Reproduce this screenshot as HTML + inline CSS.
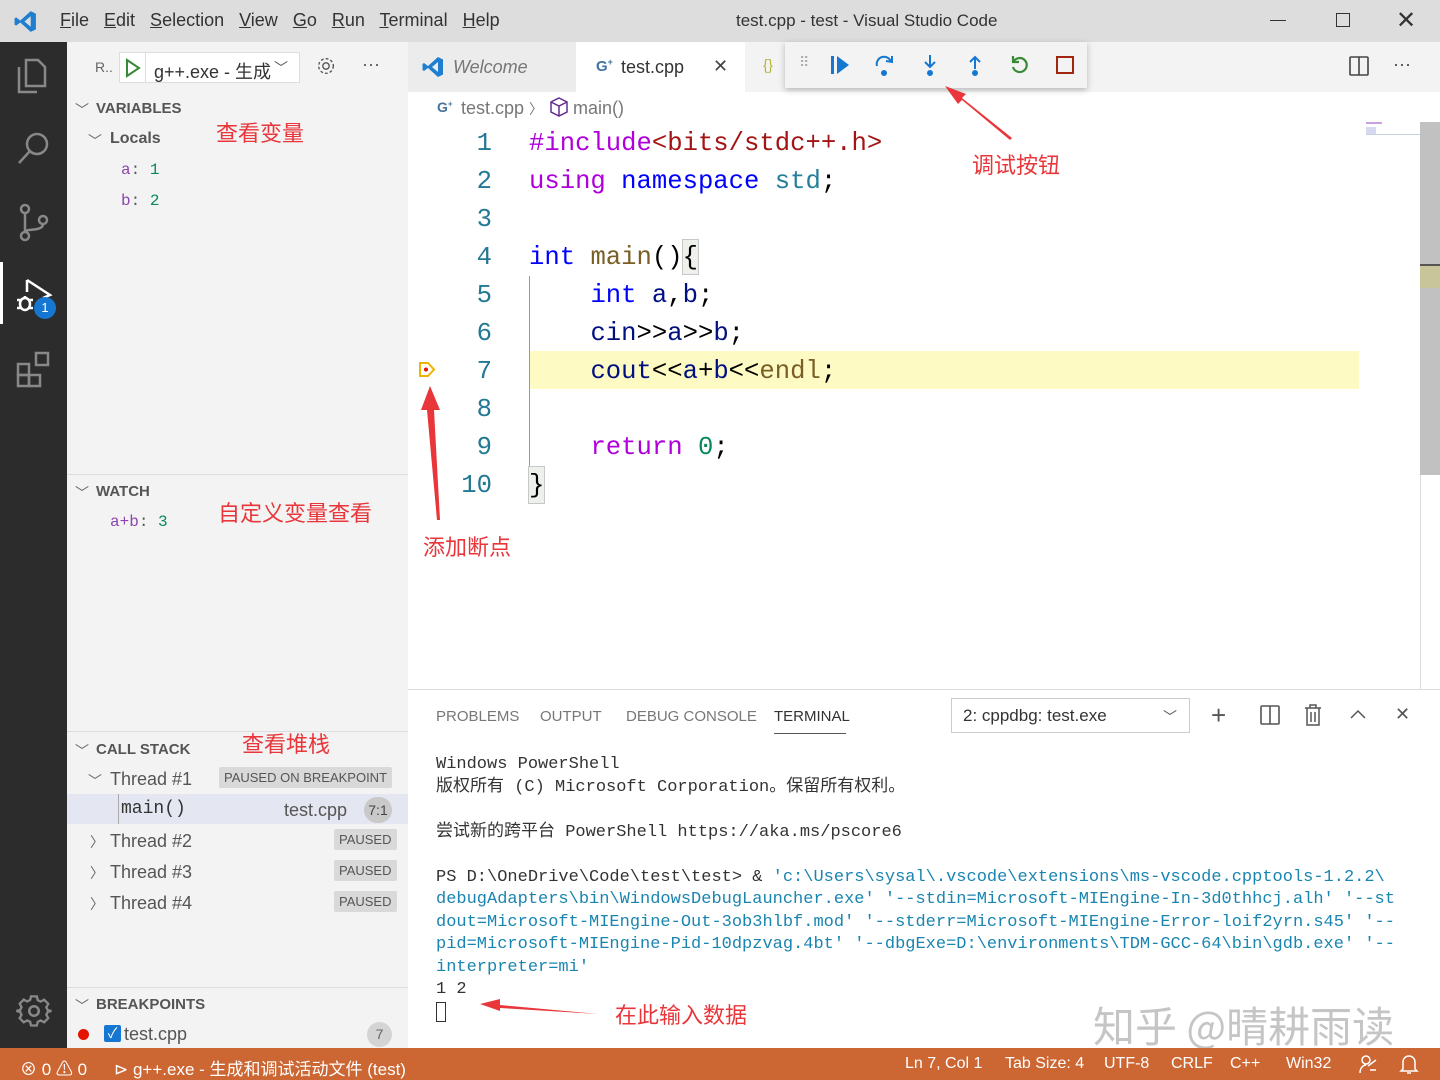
<!DOCTYPE html>
<html><head><meta charset="utf-8"><style>
*{margin:0;padding:0;box-sizing:border-box}
body{width:1440px;height:1080px;overflow:hidden;position:relative;background:#fff;font-family:"Liberation Sans","Noto Sans CJK SC",sans-serif;color:#333}
.a{position:absolute;white-space:nowrap}
.mono{font-family:"Liberation Mono","Noto Sans CJK SC",monospace}
.red{color:#e8363a;font-family:"Noto Sans CJK SC",sans-serif;font-size:22px}
.hdr{font-size:15px;font-weight:bold;color:#555}
.badge{background:#d9d9d9;color:#555;font-size:13px;padding:3px 5px;border-radius:2px}
.chev{color:#666;font-size:14px}
.code{font-family:"Liberation Mono",monospace;font-size:25.6px;line-height:38px}
.ln{color:#237893;text-align:right;width:60px}
.term{font-family:"Liberation Mono","Noto Sans CJK SC",monospace;font-size:17px;line-height:22.5px;color:#333}
.tl{color:#1a85b0}
.sb{font-size:16px;color:#fff;top:1055px}
</style></head><body>
<!-- title bar -->
<div class="a" style="left:0;top:0;width:1440px;height:42px;background:#dddddd"></div>
<svg class="a" style="left:13px;top:9px" width="25" height="25" viewBox="0 0 24 24"><path d="M17 2 L22 4.5 V19.5 L17 22 L7 13 L3 16 L1.5 15 V9 L3 8 L7 11 L17 2Z M17 7 L11 12 L17 17Z" fill="#1f7ed0" fill-rule="evenodd"/></svg>
<div class="a" style="left:60px;top:10px;font-size:18px;color:#333;word-spacing:0">
<span style="text-decoration:underline 1px">F</span>ile&nbsp;&nbsp; <span style="text-decoration:underline 1px">E</span>dit&nbsp;&nbsp; <span style="text-decoration:underline 1px">S</span>election&nbsp;&nbsp; <span style="text-decoration:underline 1px">V</span>iew&nbsp;&nbsp; <span style="text-decoration:underline 1px">G</span>o&nbsp;&nbsp; <span style="text-decoration:underline 1px">R</span>un&nbsp;&nbsp; <span style="text-decoration:underline 1px">T</span>erminal&nbsp;&nbsp; <span style="text-decoration:underline 1px">H</span>elp</div>
<div class="a" style="left:736px;top:11px;font-size:17px;color:#333">test.cpp - test - Visual Studio Code</div>
<div class="a" style="left:1270px;top:20px;width:16px;height:1px;background:#333"></div>
<div class="a" style="left:1336px;top:13px;width:14px;height:14px;border:1.5px solid #333"></div>
<div class="a" style="left:1396px;top:6px;font-size:24px;color:#333">✕</div>

<!-- activity bar -->
<div class="a" style="left:0;top:42px;width:67px;height:1006px;background:#2c2c2c"></div>
<svg class="a" style="left:16px;top:56px" width="34" height="40" viewBox="0 0 34 40" fill="none" stroke="#888" stroke-width="2.5"><path d="M10 4h12l7 7v19H10z M3 11v25h18"/></svg>
<svg class="a" style="left:16px;top:130px" width="36" height="36" viewBox="0 0 36 36" fill="none" stroke="#888" stroke-width="2.5"><circle cx="21" cy="14" r="10"/><path d="M14 21 L3 33"/></svg>
<svg class="a" style="left:18px;top:203px" width="32" height="40" viewBox="0 0 32 40" fill="none" stroke="#888" stroke-width="2.5"><circle cx="7" cy="6" r="4"/><circle cx="7" cy="33" r="4"/><circle cx="25" cy="17" r="4"/><path d="M7 10v19 M25 21c0 8-18 4-18 8"/></svg>
<div class="a" style="left:0;top:262px;width:3px;height:62px;background:#fff"></div>
<svg class="a" style="left:15px;top:278px" width="40" height="40" viewBox="0 0 40 40" fill="none" stroke="#fff" stroke-width="2.5"><path d="M12 2 L12 14 M12 2 L35 17 L28 20"/><ellipse cx="10" cy="26" rx="5" ry="6"/><path d="M2 22h4 M2 30h4 M14 22h4 M14 30h4 M10 18v2"/></svg>
<div class="a" style="left:34px;top:297px;width:22px;height:22px;border-radius:11px;background:#1677d2;color:#fff;font-size:13px;text-align:center;line-height:22px">1</div>
<svg class="a" style="left:16px;top:350px" width="36" height="38" viewBox="0 0 36 38" fill="none" stroke="#888" stroke-width="2.5"><rect x="2" y="14" width="11" height="11"/><rect x="2" y="25" width="11" height="11"/><rect x="13" y="25" width="11" height="11"/><rect x="20" y="3" width="12" height="12"/></svg>
<svg class="a" style="left:15px;top:992px" width="38" height="38" viewBox="0 0 24 24" fill="none" stroke="#888" stroke-width="1.6"><circle cx="12" cy="12" r="3"/><path d="M10 2h4l.6 2.6 2 1 2.4-1.3 2.8 2.8-1.3 2.4 1 2L24 12v0 0l-2.5 .6-1 2 1.3 2.4-2.8 2.8-2.4-1.3-2 1L14 22h-4l-.6-2.5-2-1-2.4 1.3-2.8-2.8 1.3-2.4-1-2L0 12l2.5-.6 1-2L2.2 7l2.8-2.8 2.4 1.3 2-1z" transform="scale(.92) translate(1 1)"/></svg>

<!-- sidebar -->
<div class="a" style="left:67px;top:42px;width:341px;height:1006px;background:#f3f3f3"></div>
<div class="a" style="left:95px;top:59px;font-size:14px;color:#666">R..</div>
<div class="a" style="left:119px;top:52px;width:181px;height:31px;background:#fff;border:1px solid #ddd"></div>
<div class="a" style="left:145px;top:53px;width:1px;height:29px;background:#ddd"></div>
<svg class="a" style="left:125px;top:58px" width="16" height="20"><path d="M2 2 L14 10 L2 18Z" fill="none" stroke="#388a34" stroke-width="2"/></svg>
<div class="a" style="left:154px;top:58px;font-size:18px;color:#333">g++.exe - 生成</div>
<div class="a" style="left:274px;top:58px;font-size:14px;color:#555">﹀</div>
<svg class="a" style="left:315px;top:55px" width="22" height="22" viewBox="0 0 24 24" fill="none" stroke="#555" stroke-width="1.5"><circle cx="12" cy="12" r="3.5"/><circle cx="12" cy="12" r="8" stroke-dasharray="3 2.3"/></svg>
<div class="a" style="left:362px;top:54px;font-size:18px;color:#555">···</div>

<div class="a chev" style="left:75px;top:100px">﹀</div>
<div class="a hdr" style="left:96px;top:100px">VARIABLES</div>
<div class="a chev" style="left:88px;top:131px">﹀</div>
<div class="a" style="left:110px;top:130px;font-size:16px;font-weight:bold;color:#555">Locals</div>
<div class="a red" style="left:216px;top:116px">查看变量</div>
<div class="a mono" style="left:121px;top:161px;font-size:16px"><span style="color:#8e44ad">a</span><span style="color:#555">:</span> <span style="color:#09885a">1</span></div>
<div class="a mono" style="left:121px;top:192px;font-size:16px"><span style="color:#8e44ad">b</span><span style="color:#555">:</span> <span style="color:#09885a">2</span></div>

<div class="a" style="left:67px;top:474px;width:341px;height:1px;background:#ddd"></div>
<div class="a chev" style="left:75px;top:483px">﹀</div>
<div class="a hdr" style="left:96px;top:483px">WATCH</div>
<div class="a mono" style="left:110px;top:513px;font-size:16px"><span style="color:#8e44ad">a+b</span><span style="color:#555">:</span> <span style="color:#09885a">3</span></div>
<div class="a red" style="left:218px;top:496px">自定义变量查看</div>

<div class="a" style="left:67px;top:731px;width:341px;height:1px;background:#ddd"></div>
<div class="a chev" style="left:75px;top:741px">﹀</div>
<div class="a hdr" style="left:96px;top:741px">CALL STACK</div>
<div class="a red" style="left:242px;top:727px">查看堆栈</div>
<div class="a chev" style="left:88px;top:771px">﹀</div>
<div class="a" style="left:110px;top:769px;font-size:18px;color:#555">Thread #1</div>
<div class="a badge" style="left:219px;top:767px">PAUSED ON BREAKPOINT</div>
<div class="a" style="left:67px;top:794px;width:341px;height:30px;background:#e4e6f1"></div>
<div class="a" style="left:118px;top:794px;width:1px;height:30px;background:#aaa"></div>
<div class="a mono" style="left:121px;top:799px;font-size:18px;color:#333">main()</div>
<div class="a" style="left:284px;top:800px;font-size:18px;color:#555">test.cpp</div>
<div class="a" style="left:364px;top:797px;width:28px;height:26px;border-radius:13px;background:#c9c9c9;font-size:14px;color:#444;text-align:center;line-height:26px">7:1</div>
<div class="a chev" style="left:90px;top:832px">〉</div><div class="a" style="left:110px;top:831px;font-size:18px;color:#555">Thread #2</div><div class="a badge" style="left:334px;top:829px">PAUSED</div>
<div class="a chev" style="left:90px;top:863px">〉</div><div class="a" style="left:110px;top:862px;font-size:18px;color:#555">Thread #3</div><div class="a badge" style="left:334px;top:860px">PAUSED</div>
<div class="a chev" style="left:90px;top:894px">〉</div><div class="a" style="left:110px;top:893px;font-size:18px;color:#555">Thread #4</div><div class="a badge" style="left:334px;top:891px">PAUSED</div>

<div class="a" style="left:67px;top:987px;width:341px;height:1px;background:#ddd"></div>
<div class="a chev" style="left:75px;top:996px">﹀</div>
<div class="a hdr" style="left:96px;top:996px">BREAKPOINTS</div>
<div class="a" style="left:78px;top:1029px;width:11px;height:11px;border-radius:6px;background:#e51400"></div>
<div class="a" style="left:104px;top:1025px;width:17px;height:17px;border-radius:2px;background:#1677d2;color:#fff;font-size:14px;text-align:center;line-height:17px">✓</div>
<div class="a" style="left:124px;top:1024px;font-size:18px;color:#555">test.cpp</div>
<div class="a" style="left:367px;top:1022px;width:25px;height:25px;border-radius:13px;background:#d4d4d4;font-size:14px;color:#666;text-align:center;line-height:25px">7</div>

<!-- tabs -->
<div class="a" style="left:408px;top:42px;width:1032px;height:50px;background:#f3f3f3"></div>
<div class="a" style="left:408px;top:42px;width:168px;height:50px;background:#ececec"></div>
<svg class="a" style="left:421px;top:55px" width="24" height="24" viewBox="0 0 24 24"><path d="M17 2 L22 4.5 V19.5 L17 22 L7 13 L3 16 L1.5 15 V9 L3 8 L7 11 L17 2Z M17 7 L11 12 L17 17Z" fill="#1f7ed0" fill-rule="evenodd"/></svg>
<div class="a" style="left:453px;top:57px;font-size:18px;font-style:italic;color:#777">Welcome</div>
<div class="a" style="left:576px;top:42px;width:169px;height:50px;background:#fff"></div>
<div class="a" style="left:596px;top:57px;font-size:15px;color:#44739e;font-weight:bold">G<sup style="font-size:9px">+</sup></div>
<div class="a" style="left:621px;top:57px;font-size:18px;color:#333">test.cpp</div>
<div class="a" style="left:713px;top:56px;font-size:18px;color:#444">✕</div>
<div class="a" style="left:763px;top:57px;font-size:15px;color:#b8b43a">{}</div>
<!-- debug toolbar -->
<div class="a" style="left:785px;top:42px;width:302px;height:46px;background:#f3f3f3;box-shadow:0 2px 6px rgba(0,0,0,.25)"></div>
<div class="a" style="left:799px;top:54px;font-size:14px;color:#aaa;letter-spacing:-2px">⠿</div>
<svg class="a" style="left:829px;top:54px" width="22" height="22"><rect x="2" y="2" width="3" height="18" fill="#1677d2"/><path d="M8 2 L20 11 L8 20Z" fill="#1677d2"/></svg>
<svg class="a" style="left:873px;top:54px" width="24" height="24" fill="none" stroke="#1677d2" stroke-width="2"><path d="M4 12 A7 7 0 0 1 18 8"/><path d="M13 7 L19 8 L19 2"/><circle cx="11" cy="19" r="2" fill="#1677d2"/></svg>
<svg class="a" style="left:919px;top:53px" width="22" height="24" fill="none" stroke="#1677d2" stroke-width="2"><path d="M11 2v12 M6 9l5 5 5-5"/><circle cx="11" cy="20" r="2" fill="#1677d2"/></svg>
<svg class="a" style="left:964px;top:53px" width="22" height="24" fill="none" stroke="#1677d2" stroke-width="2"><path d="M11 4v12 M6 9l5-5 5 5"/><circle cx="11" cy="20" r="2" fill="#1677d2"/></svg>
<svg class="a" style="left:1008px;top:53px" width="24" height="24" fill="none" stroke="#388a34" stroke-width="2.2"><path d="M6 8 A7 7 0 1 1 5 14"/><path d="M5 3v6h6"/></svg>
<div class="a" style="left:1056px;top:56px;width:18px;height:18px;border:2px solid #a1260d"></div>
<svg class="a" style="left:1349px;top:56px" width="20" height="20" fill="none" stroke="#444" stroke-width="1.6"><rect x="1" y="1" width="18" height="18" rx="1"/><path d="M10 1v18"/></svg>
<div class="a" style="left:1393px;top:54px;font-size:18px;color:#444">···</div>

<!-- breadcrumb -->
<div class="a" style="left:437px;top:99px;font-size:14px;color:#44739e;font-weight:bold">G<sup style="font-size:8px">+</sup></div>
<div class="a" style="left:461px;top:98px;font-size:18px;color:#777">test.cpp <span style="font-size:14px">〉</span></div>
<svg class="a" style="left:550px;top:97px" width="18" height="20" fill="none" stroke="#652d90" stroke-width="1.5"><path d="M9 1 L17 5 V15 L9 19 L1 15 V5Z M1 5 L9 9 L17 5 M9 9V19"/></svg>
<div class="a" style="left:573px;top:98px;font-size:18px;color:#777">main()</div>

<!-- editor -->
<div class="a" style="left:529px;top:351px;width:830px;height:38px;background:#fdfbc3"></div>
<div class="a" style="left:529px;top:276px;width:1px;height:190px;background:#999"></div>
<div class="a" style="left:682px;top:239px;width:17px;height:36px;background:#eef0ec;border:1px solid #c8c8c8"></div>
<div class="a" style="left:528px;top:466px;width:17px;height:38px;background:#eef0ec;border:1px solid #c8c8c8"></div>
<div class="a code ln" style="left:432px;top:125px">1<br>2<br>3<br>4<br>5<br>6<br>7<br>8<br>9<br>10</div>
<div class="a code" style="left:529px;top:125px;color:#000">
<span style="color:#af00db">#include</span><span style="color:#a31515">&lt;bits/stdc++.h&gt;</span><br>
<span style="color:#af00db">using</span> <span style="color:#0000ff">namespace</span> <span style="color:#267f99">std</span>;<br>
<br>
<span style="color:#0000ff">int</span> <span style="color:#795e26">main</span>(){<br>
&nbsp;&nbsp;&nbsp;&nbsp;<span style="color:#0000ff">int</span> <span style="color:#001080">a</span>,<span style="color:#001080">b</span>;<br>
&nbsp;&nbsp;&nbsp;&nbsp;<span style="color:#001080">cin</span>&gt;&gt;<span style="color:#001080">a</span>&gt;&gt;<span style="color:#001080">b</span>;<br>
&nbsp;&nbsp;&nbsp;&nbsp;<span style="color:#001080">cout</span>&lt;&lt;<span style="color:#001080">a</span>+<span style="color:#001080">b</span>&lt;&lt;<span style="color:#795e26">endl</span>;<br>
<br>
&nbsp;&nbsp;&nbsp;&nbsp;<span style="color:#af00db">return</span> <span style="color:#09885a">0</span>;<br>
}</div>
<svg class="a" style="left:418px;top:361px" width="18" height="17"><path d="M2 2 H10 L16 8.5 L10 15 H2Z" fill="#fff" stroke="#f0b400" stroke-width="2"/><circle cx="8" cy="8.5" r="2" fill="#e51400"/></svg>
<!-- minimap & scrollbar -->
<div class="a" style="left:1366px;top:122px;width:16px;height:2px;background:#c9a0e0"></div>
<div class="a" style="left:1366px;top:127px;width:10px;height:8px;background:#d8d8ee"></div>
<div class="a" style="left:1366px;top:134px;width:54px;height:1px;background:#c4d4e4"></div>
<div class="a" style="left:1420px;top:122px;width:20px;height:353px;background:#c1c1c1"></div>
<div class="a" style="left:1420px;top:264px;width:20px;height:2px;background:#555"></div>
<div class="a" style="left:1420px;top:266px;width:20px;height:22px;background:#c8c59a"></div>
<div class="a" style="left:1420px;top:475px;width:1px;height:215px;background:#ddd"></div>

<!-- annotations arrows -->
<svg class="a" style="left:0;top:0" width="1440" height="1080">
<path d="M1010 140 L962 100 L958 104 L945 86 L966 94 L962 98 L1012 138Z" fill="#e8363a"/>
<path d="M440 520 L434 410 L440 410 L430 386 L421 410 L427 410 L437 520Z" fill="#e8363a"/>
<path d="M598 1014 L500 1005 L500 999 L480 1004 L500 1011 L500 1008Z" fill="#e8363a"/>
</svg>
<div class="a red" style="left:972px;top:148px">调试按钮</div>
<div class="a red" style="left:423px;top:530px">添加断点</div>
<div class="a red" style="left:615px;top:998px">在此输入数据</div>

<!-- panel -->
<div class="a" style="left:408px;top:689px;width:1032px;height:1px;background:#ddd"></div>
<div class="a" style="left:436px;top:708px;font-size:15px;color:#777">PROBLEMS</div>
<div class="a" style="left:540px;top:708px;font-size:15px;color:#777">OUTPUT</div>
<div class="a" style="left:626px;top:708px;font-size:15px;color:#777">DEBUG CONSOLE</div>
<div class="a" style="left:774px;top:708px;font-size:15px;color:#333">TERMINAL</div>
<div class="a" style="left:774px;top:733px;width:72px;height:1px;background:#555"></div>
<div class="a" style="left:951px;top:698px;width:239px;height:35px;border:1px solid #ccc;background:#fff"></div>
<div class="a" style="left:963px;top:706px;font-size:17px;color:#333">2: cppdbg: test.exe</div>
<div class="a" style="left:1163px;top:707px;font-size:14px;color:#555">﹀</div>
<div class="a" style="left:1211px;top:700px;font-size:26px;color:#555;font-weight:300">+</div>
<svg class="a" style="left:1260px;top:705px" width="20" height="20" fill="none" stroke="#555" stroke-width="1.6"><rect x="1" y="1" width="18" height="18" rx="1"/><path d="M10 1v18"/></svg>
<svg class="a" style="left:1304px;top:704px" width="18" height="22" fill="none" stroke="#555" stroke-width="1.5"><path d="M1 4h16 M6 4V1h6v3 M3 4v17h12V4 M7 8v10 M11 8v10"/></svg>
<svg class="a" style="left:1350px;top:708px" width="16" height="12" fill="none" stroke="#555" stroke-width="1.5"><path d="M1 10 L8 3 L15 10"/></svg>
<div class="a" style="left:1395px;top:704px;font-size:18px;color:#555">✕</div>

<div class="a term" style="left:436px;top:754px">Windows PowerShell<br>版权所有 (C) Microsoft Corporation。保留所有权利。<br><br>尝试新的跨平台 PowerShell https://aka.ms/pscore6<br><br>PS D:\OneDrive\Code\test\test&gt;  &amp; <span class="tl">'c:\Users\sysal\.vscode\extensions\ms-vscode.cpptools-1.2.2\</span><br><span class="tl">debugAdapters\bin\WindowsDebugLauncher.exe' '--stdin=Microsoft-MIEngine-In-3d0thhcj.alh' '--st</span><br><span class="tl">dout=Microsoft-MIEngine-Out-3ob3hlbf.mod' '--stderr=Microsoft-MIEngine-Error-loif2yrn.s45' '--</span><br><span class="tl">pid=Microsoft-MIEngine-Pid-10dpzvag.4bt' '--dbgExe=D:\environments\TDM-GCC-64\bin\gdb.exe' '--</span><br><span class="tl">interpreter=mi'</span><br>1 2</div>
<div class="a" style="left:436px;top:1002px;width:10px;height:20px;border:1.5px solid #333"></div>
<div class="a" style="left:1093px;top:994px;font-size:42px;color:rgba(150,150,150,.55);font-family:'Noto Sans CJK SC',sans-serif">知乎 @晴耕雨读</div>

<!-- status bar -->
<div class="a" style="left:0;top:1048px;width:1440px;height:32px;background:#cc6633"></div>
<div class="a sb" style="left:20px;font-size:17px">⊗ 0 ⚠ 0</div>
<div class="a sb" style="left:114px;font-size:17px;font-family:'Liberation Sans','Noto Sans CJK SC',sans-serif">⊳ g++.exe - 生成和调试活动文件 (test)</div>
<div class="a sb" style="left:905px">Ln 7, Col 1</div>
<div class="a sb" style="left:1005px">Tab Size: 4</div>
<div class="a sb" style="left:1104px">UTF-8</div>
<div class="a sb" style="left:1171px">CRLF</div>
<div class="a sb" style="left:1230px">C++</div>
<div class="a sb" style="left:1286px">Win32</div>
<svg class="a" style="left:1358px;top:1054px" width="20" height="20" fill="none" stroke="#fff" stroke-width="1.5"><circle cx="8" cy="6" r="4"/><path d="M2 19c0-6 4-8 6-8 M10 12l8-6 M12 16h6"/></svg>
<svg class="a" style="left:1399px;top:1053px" width="20" height="22" fill="none" stroke="#fff" stroke-width="1.5"><path d="M4 16V9a6 6 0 0 1 12 0v7l2 2H2z M8 20h4"/></svg>
</body></html>
